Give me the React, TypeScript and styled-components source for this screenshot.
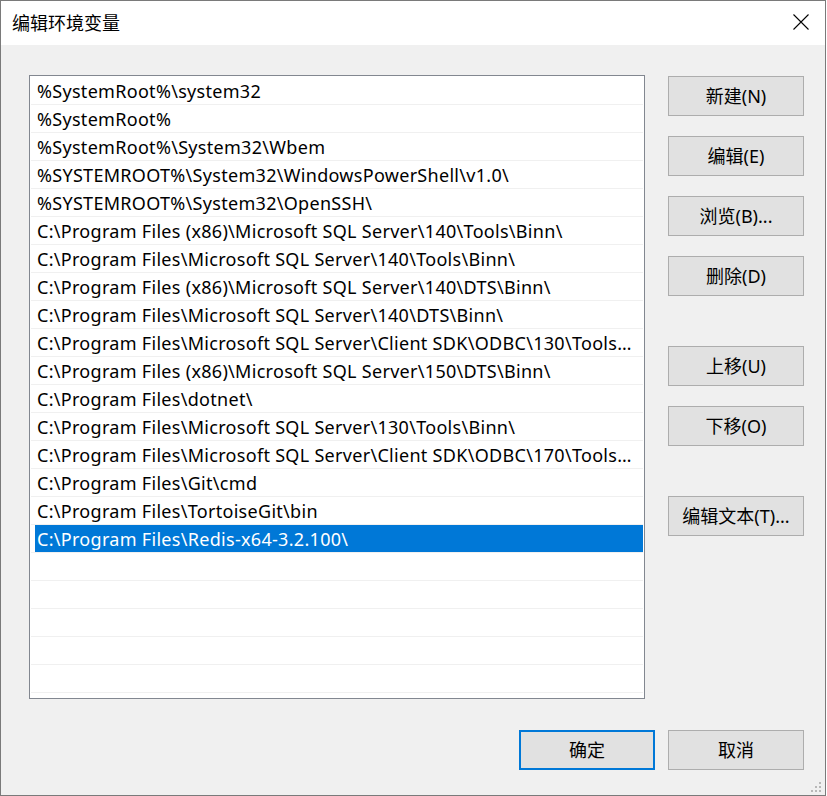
import React from "react";
import styled, { createGlobalStyle } from "styled-components";

const Global = createGlobalStyle`
  html, body { margin: 0; padding: 0; background: #ffffff; }
  * { box-sizing: border-box; }
`;

const FONT = `"Noto Sans", "Noto Sans CJK SC", sans-serif`;

const Window = styled.div`
  width: 826px;
  height: 796px;
  border: 1px solid #7a7a7a;
  background: #f0f0f0;
  display: flex;
  flex-direction: column;
  position: relative;
  font-family: ${FONT};
  color: #000;
`;

const TitleBar = styled.div`
  height: 44px;
  background: #ffffff;
  display: flex;
  align-items: center;
  justify-content: space-between;
  padding: 0 16px 0 11px;
  flex-shrink: 0;
`;

const Title = styled.div`
  font-size: 18px;
  line-height: 1;
  margin-top: -1px;
`;

const CloseBtn = styled.div`
  width: 16px;
  height: 16px;
  display: flex;
  margin-top: -2px;
`;

const Body = styled.div`
  flex: 1;
  display: flex;
  flex-direction: column;
  padding: 30px 21px 0 28px;
`;

const Main = styled.div`
  display: flex;
  gap: 23px;
`;

const ListBox = styled.div`
  width: 616px;
  height: 624px;
  flex-shrink: 0;
  border: 1px solid #828790;
  background: #ffffff;
  padding: 1px 1px 0 1px;
  overflow: hidden;
`;

const Row = styled.div`
  height: 28px;
  border-bottom: 1px solid #f0f0f0;
  display: flex;
  padding: 0 0 0 4px;
`;

const Cell = styled.div<{ $selected?: boolean }>`
  flex: 1;
  min-width: 0;
  padding: 1px 8px 0 2px;
  font-size: 18px;
  line-height: 26px;
  letter-spacing: 0.3px;
  white-space: nowrap;
  overflow: hidden;
  text-overflow: ellipsis;
  background: ${(p) => (p.$selected ? "#0078d7" : "transparent")};
  color: ${(p) => (p.$selected ? "#ffffff" : "#000000")};
`;

const SideColumn = styled.div`
  display: flex;
  flex-direction: column;
  flex-shrink: 0;
  padding-top: 1px;
`;

const Button = styled.div<{ $gap?: number; $default?: boolean }>`
  width: 136px;
  height: 40px;
  flex-shrink: 0;
  margin-top: ${(p) => p.$gap ?? 0}px;
  background: #e1e1e1;
  border: ${(p) => (p.$default ? "2px solid #0078d7" : "1px solid #adadad")};
  display: flex;
  align-items: center;
  justify-content: center;
  font-size: 18px;
  line-height: 1;
  font-family: ${FONT};
`;

const Footer = styled.div`
  display: flex;
  justify-content: flex-end;
  gap: 13px;
  margin-top: 31px;
`;

const Grip = styled.svg`
  position: absolute;
  right: 3px;
  bottom: 2px;
`;

const entries = [
  "%SystemRoot%\\system32",
  "%SystemRoot%",
  "%SystemRoot%\\System32\\Wbem",
  "%SYSTEMROOT%\\System32\\WindowsPowerShell\\v1.0\\",
  "%SYSTEMROOT%\\System32\\OpenSSH\\",
  "C:\\Program Files (x86)\\Microsoft SQL Server\\140\\Tools\\Binn\\",
  "C:\\Program Files\\Microsoft SQL Server\\140\\Tools\\Binn\\",
  "C:\\Program Files (x86)\\Microsoft SQL Server\\140\\DTS\\Binn\\",
  "C:\\Program Files\\Microsoft SQL Server\\140\\DTS\\Binn\\",
  "C:\\Program Files\\Microsoft SQL Server\\Client SDK\\ODBC\\130\\Tools\\Binn\\",
  "C:\\Program Files (x86)\\Microsoft SQL Server\\150\\DTS\\Binn\\",
  "C:\\Program Files\\dotnet\\",
  "C:\\Program Files\\Microsoft SQL Server\\130\\Tools\\Binn\\",
  "C:\\Program Files\\Microsoft SQL Server\\Client SDK\\ODBC\\170\\Tools\\Binn\\",
  "C:\\Program Files\\Git\\cmd",
  "C:\\Program Files\\TortoiseGit\\bin",
  "C:\\Program Files\\Redis-x64-3.2.100\\",
];

const TOTAL_ROWS = 23;

const sideButtons: { label: string; gap: number }[] = [
  { label: "新建(N)", gap: 0 },
  { label: "编辑(E)", gap: 20 },
  { label: "浏览(B)...", gap: 20 },
  { label: "删除(D)", gap: 20 },
  { label: "上移(U)", gap: 50 },
  { label: "下移(O)", gap: 20 },
  { label: "编辑文本(T)...", gap: 50 },
];

export default function App() {
  const rows = Array.from({ length: TOTAL_ROWS }, (_, i) => entries[i] ?? "");
  return (
    <>
      <Global />
      <Window>
        <TitleBar>
          <Title>编辑环境变量</Title>
          <CloseBtn>
            <svg width="16" height="16" viewBox="0 0 16 16">
              <path d="M0.5 0.5 L15.5 15.5 M15.5 0.5 L0.5 15.5" stroke="#000" strokeWidth="1.1" fill="none" />
            </svg>
          </CloseBtn>
        </TitleBar>
        <Body>
          <Main>
            <ListBox>
              {rows.map((text, i) => (
                <Row key={i}>
                  <Cell $selected={i === 16}>{text || "\u00a0"}</Cell>
                </Row>
              ))}
            </ListBox>
            <SideColumn>
              {sideButtons.map((b) => (
                <Button key={b.label} $gap={b.gap}>
                  {b.label}
                </Button>
              ))}
            </SideColumn>
          </Main>
          <Footer>
            <Button $default>确定</Button>
            <Button>取消</Button>
          </Footer>
        </Body>
        <Grip width="12" height="12" viewBox="0 0 12 12">
          <g fill="#b8b8b8">
            <rect x="9" y="1" width="2" height="2" />
            <rect x="5" y="5" width="2" height="2" />
            <rect x="9" y="5" width="2" height="2" />
            <rect x="1" y="9" width="2" height="2" />
            <rect x="5" y="9" width="2" height="2" />
            <rect x="9" y="9" width="2" height="2" />
          </g>
        </Grip>
      </Window>
    </>
  );
}
